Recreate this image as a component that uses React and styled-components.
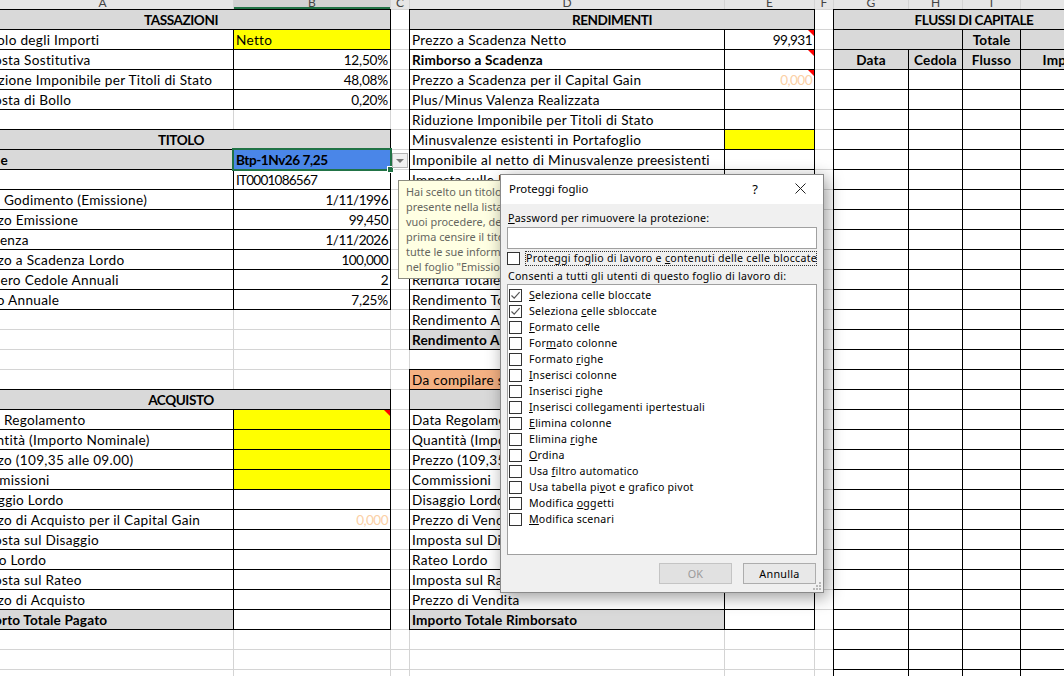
import React from 'react';
import styled, { createGlobalStyle, css } from 'styled-components';

const GlobalStyle = createGlobalStyle`
  html, body {
    margin: 0;
    padding: 0;
    background: #fff;
    overflow: hidden;
  }
`;

const Page = styled.div`
  position: relative;
  width: 1064px;
  height: 676px;
  overflow: hidden;
  background: #fff;
`;

const Sheet = styled.div`
  display: grid;
  grid-template-columns: 261px 156px 18px 314px 89px 18px 74px 53px 57px 93px;
  grid-auto-rows: 19px;
  grid-template-rows: 9px;
  gap: 1px;
  margin-left: -28px;
  width: 1142px;
  background: #d4d4d4;
  font-family: Lato, "Liberation Sans", sans-serif;
  font-size: 13.6px;
  color: #000;
`;

const ColHead = styled.div`
  background: ${p => (p.$active ? '#d2d2d2' : '#e6e6e6')};
  color: #444;
  font-size: 12px;
  line-height: 5px;
  text-align: center;
  overflow: hidden;
  ${p => p.$active && css`box-shadow: inset 0 -2px 0 #217346;`}
`;

const Cell = styled.div`
  position: relative;
  background: ${p => p.$fill || '#fff'};
  color: ${p => p.$color || '#000'};
  font-weight: ${p => (p.$bold ? 700 : 400)};
  text-align: ${p => p.$align || 'left'};
  letter-spacing: ${p => p.$track ?? (p.$bold ? 0.15 : 0.3)}px;
  text-indent: ${p => p.$indent || 0}px;
  line-height: 20px;
  padding: 0 2px;
  white-space: nowrap;
  grid-column: span ${p => p.$span || 1};
  ${p => p.$boxed && css`outline: 1px solid #000;`}
  ${p => p.$selected && css`
    outline: 2px solid #217346;
    outline-offset: 0;
    z-index: 2;
  `}
  ${p => p.$note && css`
    &::after {
      content: '';
      position: absolute;
      top: 0;
      right: 0;
      border-top: 6px solid #f00;
      border-left: 6px solid transparent;
    }
  `}
`;

const FillHandle = styled.span`
  position: absolute;
  right: -4px;
  bottom: -4px;
  width: 5px;
  height: 5px;
  background: #217346;
  border: 1px solid #fff;
`;

const DropButton = styled.span`
  position: absolute;
  left: calc(100% + 2px);
  top: 3px;
  width: 16px;
  height: 15px;
  box-sizing: border-box;
  display: flex;
  align-items: center;
  justify-content: center;
  background: #f0f0f0;
  border: 1px solid #b4b4b4;
  &::before {
    content: '';
    border-top: 4px solid #777;
    border-left: 4px solid transparent;
    border-right: 4px solid transparent;
  }
`;

const Tip = styled.div`
  position: absolute;
  left: 398px;
  top: 180px;
  width: 190px;
  height: 99px;
  box-sizing: border-box;
  padding: 3px 0 0 7px;
  background: #ffffe3;
  border: 1px solid #8c8c80;
  color: #66665f;
  font-family: "Noto Sans", sans-serif;
  font-size: 10.9px;
  line-height: 15px;
  white-space: nowrap;
`;

const Dialog = styled.div`
  position: absolute;
  left: 500px;
  top: 174px;
  width: 324px;
  height: 419px;
  box-sizing: border-box;
  display: flex;
  flex-direction: column;
  background: #f0f0f0;
  border: 1px solid #8a8a8a;
  box-shadow: 3px 4px 16px rgba(0, 0, 0, 0.4);
  font-family: "Noto Sans", sans-serif;
  font-size: 10.6px;
  letter-spacing: 0.25px;
  color: #000;
`;

const TitleBar = styled.div`
  height: 27px;
  padding-bottom: 2px;
  flex: none;
  display: flex;
  align-items: center;
  padding-left: 8px;
  background: #fff;
  font-size: 11.4px;
  letter-spacing: 0;
`;

const TitleText = styled.span`
  flex: 1;
`;

const HelpMark = styled.span`
  width: 46px;
  text-align: center;
  font-size: 13px;
`;

const CloseBox = styled.span`
  width: 44px;
  display: flex;
  justify-content: center;
  margin-right: 1px;
`;

const Body = styled.div`
  flex: 1;
  display: flex;
  flex-direction: column;
  padding: 6px 6px 8px;
  position: relative;
`;

const FieldLabel = styled.div`
  height: 17px;
  line-height: 16px;
  padding-left: 1px;
`;

const PasswordBox = styled.div`
  height: 20px;
  background: #fff;
  border: 1px solid #a0a0a0;
`;

const MainCheck = styled.div`
  display: flex;
  align-items: center;
  gap: 5px;
  margin-top: 1px;
  height: 17px;
`;

const FocusLabel = styled.span`
  flex: 1;
  line-height: 15px;
  padding-left: 1px;
  letter-spacing: 0.28px;
  outline: 1px dotted #333;
  outline-offset: -1px;
  white-space: nowrap;
`;

const AllowLabel = styled.div`
  margin-top: 1px;
  height: 16px;
  line-height: 16px;
  padding-left: 1px;
`;

const OptionList = styled.div`
  height: 267px;
  padding: 2px 0 0 1px;
  background: #fff;
  border: 1px solid #a0a0a0;
`;

const Option = styled.div`
  display: flex;
  align-items: center;
  gap: 7px;
  height: 16px;
  white-space: nowrap;
`;

const Box = styled.span`
  width: 11px;
  height: 11px;
  flex: none;
  display: inline-flex;
  align-items: center;
  justify-content: center;
  background: #fff;
  border: 1px solid #333;
`;

const Buttons = styled.div`
  margin-top: 8px;
  display: flex;
  justify-content: flex-end;
  gap: 11px;
  padding-right: 1px;
`;

const Btn = styled.div`
  width: 73px;
  height: 21px;
  box-sizing: border-box;
  text-align: center;
  line-height: 19px;
  font-size: 10.8px;
  background: ${p => (p.$disabled ? '#e1e1e1' : '#e8e8e8')};
  color: ${p => (p.$disabled ? '#9a9a9a' : '#000')};
  border: 1px solid ${p => (p.$disabled ? '#c4c4c4' : '#adadad')};
`;

const Grip = styled.svg`
  position: absolute;
  right: 1px;
  bottom: 1px;
`;

const GREY = '#d9d9d9';
const YELLOW = '#ffff00';
const FADED = '#fbd0a6';
const CAPS_TRACK = -0.45;
const DIGIT_TRACK = -0.55;

const leftRows = [
  { head: 'TASSAZIONI' },
  { label: 'Calcolo degli Importi', value: 'Netto', fill: YELLOW, align: 'left', track: 0.3 },
  { label: 'Imposta Sostitutiva', value: '12,50%', track: -0.2 },
  { label: 'Riduzione Imponibile per Titoli di Stato', value: '48,08%', track: -0.2 },
  { label: 'Imposta di Bollo', value: '0,20%', track: -0.2 },
  null,
  { head: 'TITOLO' },
  { label: 'Nome', value: 'Btp-1Nv26 7,25', labelFill: GREY, bold: true, selected: true, align: 'left', track: -0.45 },
  { label: 'ISIN', value: 'IT0001086567', align: 'left', track: -0.8 },
  { label: 'Data Godimento (Emissione)', value: '1/11/1996' },
  { label: 'Prezzo Emissione', value: '99,450' },
  { label: 'Scadenza', value: '1/11/2026' },
  { label: 'Prezzo a Scadenza Lordo', value: '100,000' },
  { label: 'Numero Cedole Annuali', value: '2' },
  { label: 'Tasso Annuale', value: '7,25%', track: -0.2 },
  null,
  null,
  null,
  null,
  { head: 'ACQUISTO' },
  { label: 'Data Regolamento', fill: YELLOW, note: true },
  { label: 'Quantità (Importo Nominale)', fill: YELLOW },
  { label: 'Prezzo (109,35 alle 09.00)', fill: YELLOW },
  { label: 'Commissioni', fill: YELLOW },
  { label: 'Disaggio Lordo' },
  { label: 'Prezzo di Acquisto per il Capital Gain', value: '0,000', color: FADED },
  { label: 'Imposta sul Disaggio' },
  { label: 'Rateo Lordo' },
  { label: 'Imposta sul Rateo' },
  { label: 'Prezzo di Acquisto' },
  { label: 'Importo Totale Pagato', labelFill: GREY, labelBold: true },
];

const midRows = [
  { head: 'RENDIMENTI' },
  { label: 'Prezzo a Scadenza Netto', value: '99,931', note: true },
  { label: 'Rimborso a Scadenza', labelBold: true, note: true },
  { label: 'Prezzo a Scadenza per il Capital Gain', value: '0,000', color: FADED, note: true },
  { label: 'Plus/Minus Valenza Realizzata' },
  { label: 'Riduzione Imponibile per Titoli di Stato' },
  { label: 'Minusvalenze esistenti in Portafoglio', fill: YELLOW },
  { label: 'Imponibile al netto di Minusvalenze preesistenti' },
  { label: 'Imposta sulle Plusvalenze' },
  { label: '' },
  { label: '' },
  { label: '' },
  { label: '' },
  { label: 'Rendita Totale' },
  { label: 'Rendimento Totale' },
  { label: 'Rendimento Annuo' },
  { label: 'Rendimento Annuo Netto', labelFill: GREY, labelBold: true },
  null,
  { banner: 'Da compilare solo in caso di vendita' },
  { head: '' },
  { label: 'Data Regolamento' },
  { label: 'Quantità (Importo Nominale)' },
  { label: 'Prezzo (109,35 alle 09.00)' },
  { label: 'Commissioni' },
  { label: 'Disaggio Lordo' },
  { label: 'Prezzo di Vendita per il Capital Gain' },
  { label: 'Imposta sul Disaggio' },
  { label: 'Rateo Lordo' },
  { label: 'Imposta sul Rateo' },
  { label: 'Prezzo di Vendita' },
  { label: 'Importo Totale Rimborsato', labelFill: GREY, labelBold: true },
];

const options = [
  ['', 'S', 'eleziona celle bloccate', true],
  ['Seleziona ', 'c', 'elle sbloccate', true],
  ['', 'F', 'ormato celle'],
  ['For', 'm', 'ato colonne'],
  ['Formato ', 'r', 'ighe'],
  ['', 'I', 'nserisci colonne'],
  ['Inserisci ', 'r', 'ighe'],
  ['', 'I', 'nserisci collegamenti ipertestuali'],
  ['', 'E', 'limina colonne'],
  ['Elimina ', 'r', 'ighe'],
  ['', 'O', 'rdina'],
  ['Usa ', 'f', 'iltro automatico'],
  ['Usa tabella pi', 'v', 'ot e grafico pivot'],
  ['Modifica ', 'o', 'ggetti'],
  ['', 'M', 'odifica scenari'],
];

const tipLines = [
  'Hai scelto un titolo non',
  'presente nella lista. Se',
  'vuoi procedere, devi',
  'prima censire il titolo con',
  'tutte le sue informazioni',
  'nel foglio "Emissioni"',
];

const columns = ['A', 'B', 'C', 'D', 'E', 'F', 'G', 'H', 'I', 'J'];
const ROW_COUNT = 34;

// two cells (label + value) of one of the boxed tables
const TablePair = ({ row, indent }) => {
  if (!row) {
    return (
      <>
        <Cell />
        <Cell />
      </>
    );
  }
  if (row.head !== undefined) {
    return <Cell $span={2} $boxed $fill={GREY} $bold $track={CAPS_TRACK} $align="center">{row.head}</Cell>;
  }
  if (row.banner) {
    return <Cell $span={2} $boxed $fill="#f4b183">{row.banner}</Cell>;
  }
  return (
    <>
      <Cell $boxed $indent={indent} $fill={row.labelFill} $bold={row.bold || row.labelBold}>{row.label}</Cell>
      <Cell
        $boxed={!row.selected}
        $selected={row.selected}
        $fill={row.selected ? '#4a86e8' : row.fill}
        $bold={row.bold}
        $color={row.color}
        $track={row.track ?? DIGIT_TRACK}
        $align={row.align || 'right'}
        $note={row.note}
      >
        {row.value}
        {row.selected && <FillHandle />}
        {row.selected && <DropButton />}
      </Cell>
    </>
  );
};

const FlowCells = ({ index }) => {
  if (index === 0) {
    return <Cell $span={4} $boxed $fill={GREY} $bold $track={CAPS_TRACK} $align="center">FLUSSI DI CAPITALE</Cell>;
  }
  if (index === 1) {
    return (
      <>
        <Cell $span={2} $boxed $fill={GREY} />
        <Cell $boxed $fill={GREY} $bold $align="center">Totale</Cell>
        <Cell $boxed $fill={GREY} />
      </>
    );
  }
  if (index === 2) {
    return ['Data', 'Cedola', 'Flusso', 'Importo'].map(t => (
      <Cell key={t} $boxed $fill={GREY} $bold $align="center">{t}</Cell>
    ));
  }
  return (
    <>
      <Cell $boxed />
      <Cell $boxed />
      <Cell $boxed />
      <Cell $boxed />
    </>
  );
};

const Check = () => (
  <svg width="11" height="11" viewBox="0 0 11 11">
    <path d="M1.5 5.5 L4.2 8.2 L9.6 2.2" fill="none" stroke="#555" strokeWidth="1.2" />
  </svg>
);

const App = () => {
  const rows = Array.from({ length: ROW_COUNT }, (_, i) => i);

  return (
    <Page>
      <GlobalStyle />
      <Sheet>
        {columns.map(c => (
          <ColHead key={c} $active={c === 'B'}>{c}</ColHead>
        ))}
        {rows.map(i => (
          <React.Fragment key={i}>
            <TablePair row={leftRows[i]} indent={-3.5} />
            <Cell />
            <TablePair row={midRows[i]} />
            <Cell />
            <FlowCells index={i} />
          </React.Fragment>
        ))}
      </Sheet>

      <Tip>
        {tipLines.map(line => (
          <div key={line}>{line}</div>
        ))}
      </Tip>

      <Dialog>
        <TitleBar>
          <TitleText>Proteggi foglio</TitleText>
          <HelpMark>?</HelpMark>
          <CloseBox>
            <svg width="11" height="11" viewBox="0 0 11 11">
              <path d="M0.5 0.5 L10.5 10.5 M10.5 0.5 L0.5 10.5" stroke="#222" strokeWidth="1" />
            </svg>
          </CloseBox>
        </TitleBar>
        <Body>
          <FieldLabel><u>P</u>assword per rimuovere la protezione:</FieldLabel>
          <PasswordBox />
          <MainCheck>
            <Box />
            <FocusLabel>Proteggi foglio di lavoro e <u>c</u>ontenuti delle celle bloccate</FocusLabel>
          </MainCheck>
          <AllowLabel>Consenti a tutti gli utenti di questo foglio di lavoro di:</AllowLabel>
          <OptionList>
            {options.map(([pre, key, post, checked]) => (
              <Option key={pre + key + post}>
                <Box>{checked && <Check />}</Box>
                <span>{pre}<u>{key}</u>{post}</span>
              </Option>
            ))}
          </OptionList>
          <Buttons>
            <Btn $disabled>OK</Btn>
            <Btn>Annulla</Btn>
          </Buttons>
          <Grip width="9" height="9" viewBox="0 0 9 9">
            <path d="M6 0h2v2H6z M3 3h2v2H3z M6 3h2v2H6z M0 6h2v2H0z M3 6h2v2H3z M6 6h2v2H6z" fill="#b8b8b8" />
          </Grip>
        </Body>
      </Dialog>
    </Page>
  );
};

export default App;
